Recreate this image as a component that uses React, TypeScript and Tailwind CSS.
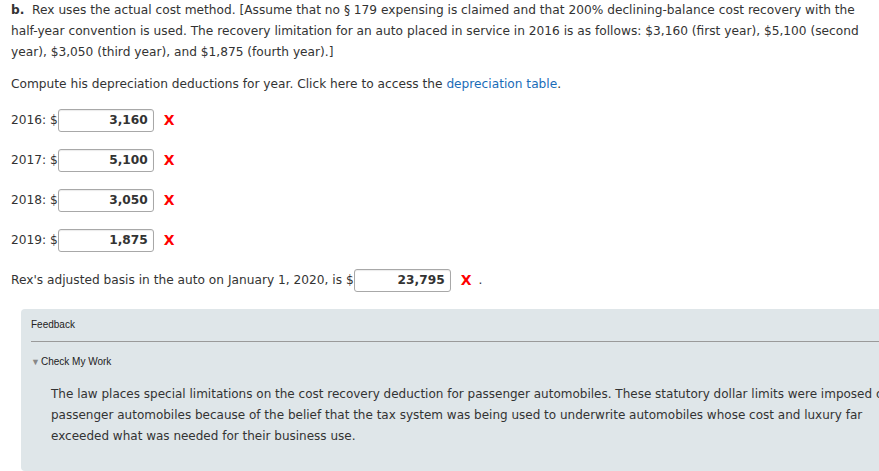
import React from "react";

const rows = [
  { year: "2016", value: "3,160" },
  { year: "2017", value: "5,100" },
  { year: "2018", value: "3,050" },
  { year: "2019", value: "1,875" },
];

function Box({ value, w }: { value: string; w: string }) {
  return (
    <span
      className={`inline-flex h-[23px] ${w} items-center justify-end rounded-[3px] border border-[#a8a8a8] bg-white pr-[5px] font-bold text-[#333] shadow-[inset_0_1px_1px_rgba(0,0,0,0.08)]`}
    >
      {value}
    </span>
  );
}

function Cross() {
  return <span className="ml-[10px] font-bold text-[14px] text-[#ff0000]">X</span>;
}

export default function App() {
  return (
    <div
      className="relative h-[471px] w-[879px] overflow-hidden bg-white text-[12.2px] text-[#333]"
      style={{ fontFamily: '"DejaVu Sans", Verdana, sans-serif' }}
    >
      <div className="pl-[11px] pt-0">
        <p className="leading-[21px] w-[860px]">
          <b>b.</b>&nbsp; Rex uses the actual cost method. [Assume that no § 179 expensing is claimed and that 200% declining-balance cost recovery with the half-year convention is used. The recovery limitation for an auto placed in service in 2016 is as follows: $3,160 (first year), $5,100 (second year), $3,050 (third year), and $1,875 (fourth year).]
        </p>
        <p className="mt-[11px] leading-[21px]">
          Compute his depreciation deductions for year. Click here to access the{" "}
          <span className="text-[#1a6cb8]">depreciation table</span>.
        </p>
        <div className="mt-[14px] flex flex-col gap-[17px]">
          {rows.map((r) => (
            <div key={r.year} className="flex items-center">
              <span>{r.year}: $</span>
              <Box value={r.value} w="w-[96px]" />
              <Cross />
            </div>
          ))}
        </div>
        <div className="mt-[17px] flex items-center">
          <span>Rex's adjusted basis in the auto on January 1, 2020, is $</span>
          <Box value="23,795" w="w-[97px]" />
          <Cross />
          <span className="ml-[7px]">.</span>
        </div>
      </div>
      <div className="ml-[21px] mt-[17px] h-[162px] w-[900px] rounded-[4px] bg-[#dfe6e9] pl-[10px] pt-[9px]">
        <div
          className="text-[10px] leading-[14px] text-[#222]"
          style={{ fontFamily: '"Liberation Sans", Arial, sans-serif' }}
        >
          Feedback
        </div>
        <div className="mt-[9px] h-px bg-[#9a9a9a]" />
        <div
          className="mt-[13px] flex items-center text-[10px] leading-[14px] text-[#222]"
          style={{ fontFamily: '"Liberation Sans", Arial, sans-serif' }}
        >
          <span className="mr-[1px] text-[9px] text-[#888]">▼</span>Check My Work
        </div>
        <p className="ml-[20px] mt-[15px] w-[842px] text-[12px] leading-[21px] text-[#333]">
          The law places special limitations on the cost recovery deduction for passenger automobiles. These statutory dollar limits were imposed on passenger automobiles because of the belief that the tax system was being used to underwrite automobiles whose cost and luxury far exceeded what was needed for their business use.
        </p>
      </div>
    </div>
  );
}
